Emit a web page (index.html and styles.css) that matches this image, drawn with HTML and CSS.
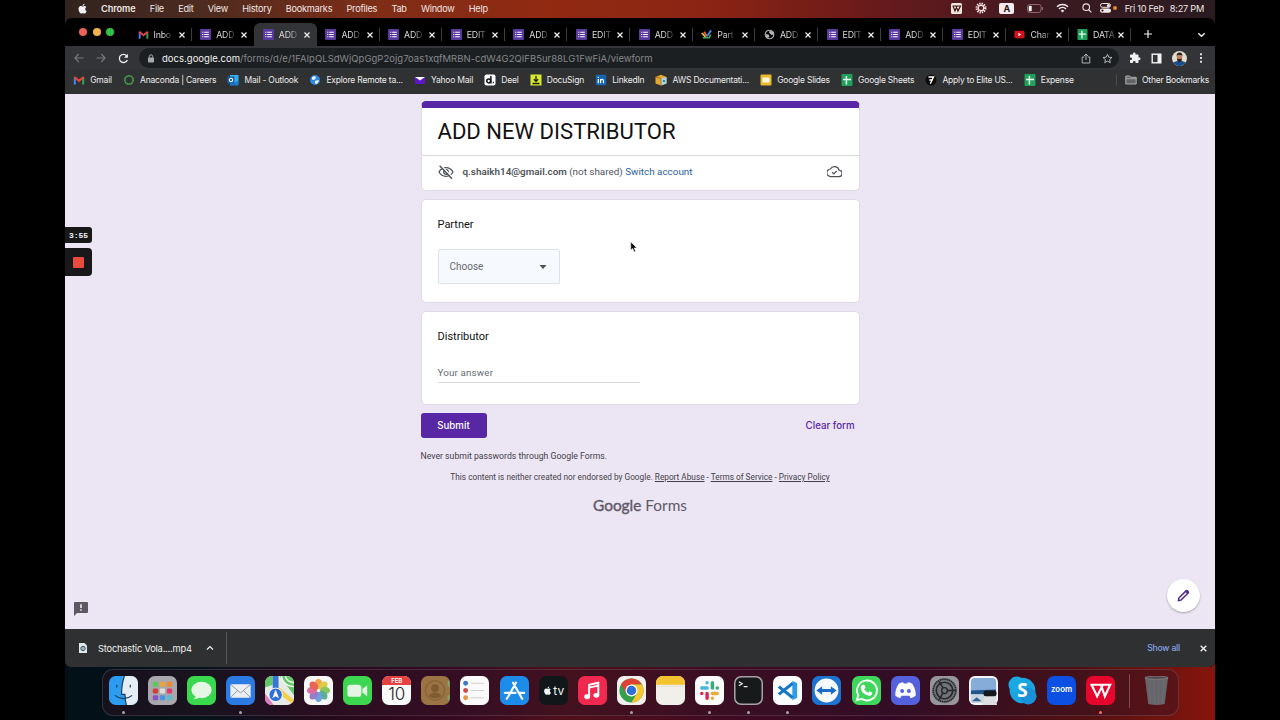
FILE: index.html
```html
<!DOCTYPE html>
<html lang="en">
<head>
  <meta charset="UTF-8" />
  <title>ADD NEW DISTRIBUTOR</title>
  <link rel="stylesheet" href="styles.css">
</head>
<body>
  <!-- shared icons -->
  <svg class="defs" width="0" height="0">
    <symbol id="form" viewBox="0 0 12 12"><rect width="12" height="12" rx="1" fill="#5b3a9e"/><path d="M2.4 3.5h1.2M2.4 6h1.2M2.4 8.5h1.2M4.6 3.5h5M4.6 6h5M4.6 8.5h5" stroke="#fff" stroke-width="1.2"/></symbol>
    <symbol id="sheet" viewBox="0 0 12 12"><rect x=".5" width="11" height="12" rx="1" fill="#1fa05b"/><path d="M2 5.6h8M5.4 2v8.4" stroke="#e8f7ee" stroke-width="1.5"/></symbol>
    <symbol id="gmail" viewBox="0 0 12 12"><path d="M1.8 10.5V3" stroke="#4285f4" stroke-width="2"/><path d="M10.2 10.5V3" stroke="#34a853" stroke-width="2"/><path d="M1.3 3L6 6.8 10.7 3" fill="none" stroke="#ea4335" stroke-width="2.2"/></symbol>
    <symbol id="x" viewBox="0 0 8 8"><path d="M1.5 1.5l5 5M6.5 1.5l-5 5" stroke="#f1f1f1" stroke-width="1.2"/></symbol>
    <symbol id="apple" viewBox="0 0 24 24"><path fill="#f4f4f4" d="M17.1 12.7c0-2.300 1.900-3.400 2-3.500-1.100-1.600-2.800-1.800-3.400-1.800-1.400-.1-2.800.9-3.500.9s-1.800-.8-3-.8c-1.500 0-3 .9-3.800 2.300-1.600 2.800-.4 7 1.200 9.300.8 1.100 1.700 2.400 2.900 2.300 1.200 0 1.600-.7 3-.7s1.800.7 3 .7c1.300 0 2-1.100 2.800-2.200.9-1.300 1.300-2.500 1.300-2.600-.1 0-2.500-1-2.500-3.900zM14.800 5.900c.6-.8 1.100-1.900 1-2.900-.9 0-2.100.6-2.700 1.400-.6.7-1.200 1.800-1 2.800 1 .1 2.100-.5 2.700-1.300z"/></symbol>
  </svg>

  <div class="desktop">
    <header class="menubar">
      <svg class="apple" width="13" height="13"><use href="#apple"/></svg>
      <nav class="menus">
        <b>Chrome</b><span>File</span><span>Edit</span><span>View</span><span>History</span><span>Bookmarks</span><span>Profiles</span><span>Tab</span><span>Window</span><span>Help</span>
      </nav>
      <div class="status">
        <svg width="11" height="11" viewBox="0 0 11 11"><rect width="11" height="11" rx="1.500" fill="#f6e4e0"/><path d="M1.500 3h3.500L7 8l2.500-5H6L4 8 2 3" fill="none" stroke="#3a1512" stroke-width="1.200"/></svg>
        <svg width="12" height="12" viewBox="0 0 12 12"><circle cx="6" cy="6" r="4.200" fill="none" stroke="#f3dede" stroke-width="2.600" stroke-dasharray="1.300 .9"/><circle cx="6" cy="6" r="2.700" fill="none" stroke="#f3dede" stroke-width="1.200"/></svg>
        <span class="lang">A</span>
        <svg width="17" height="9" viewBox="0 0 17 9"><rect x=".5" y=".5" width="13.500" height="8" rx="2.200" fill="none" stroke="#8f666d"/><rect x="1.700" y="1.700" width="3" height="5.600" rx="1" fill="#fff"/><path d="M15.300 3v3" stroke="#8f666d" stroke-width="1.300"/></svg>
        <svg width="13" height="10" viewBox="0 0 13 10"><path d="M1 3.700a7.800 7.800 0 0 1 11 0M3 5.900a5 5 0 0 1 7 0" fill="none" stroke="#f3e8ea" stroke-width="1.500"/><path d="M4.700 7.700a2.600 2.600 0 0 1 3.600 0L6.500 9.600z" fill="#f3e8ea"/></svg>
        <svg width="10" height="10" viewBox="0 0 10 10"><circle cx="4.200" cy="4.200" r="3.300" fill="none" stroke="#eee0e3" stroke-width="1.100"/><path d="M6.600 6.600L9.400 9.400" stroke="#eee0e3" stroke-width="1.200"/></svg>
        <span class="control"><svg width="11" height="10" viewBox="0 0 11 10"><rect x=".5" y=".5" width="10" height="3.800" rx="1.900" fill="none" stroke="#f3e8ea"/><circle cx="8.400" cy="2.400" r="1.500" fill="#f3e8ea"/><rect y="5.500" width="11" height="4.300" rx="2.100" fill="#f3e8ea"/><circle cx="2.500" cy="7.600" r="1.100" fill="#3b1a20"/></svg><i></i></span>
        <span class="date">Fri 10 Feb</span><span class="time">8:27 PM</span>
      </div>
    </header>

    <div class="window">
      <div class="tabstrip">
        <div class="lights"><i class="red"></i><i class="yellow"></i><i class="green"></i></div>
        <div class="tabs">
          <div class="tab"><svg><use href="#gmail"/></svg><span>Inbo</span><svg class="x"><use href="#x"/></svg></div>
          <div class="tab nosep"><svg><use href="#form"/></svg><span>ADD</span><svg class="x"><use href="#x"/></svg></div>
          <div class="tab active"><svg><use href="#form"/></svg><span>ADD</span><svg class="x"><use href="#x"/></svg></div>
          <div class="tab"><svg><use href="#form"/></svg><span>ADD</span><svg class="x"><use href="#x"/></svg></div>
          <div class="tab"><svg><use href="#form"/></svg><span>ADD</span><svg class="x"><use href="#x"/></svg></div>
          <div class="tab"><svg><use href="#form"/></svg><span>EDIT</span><svg class="x"><use href="#x"/></svg></div>
          <div class="tab"><svg><use href="#form"/></svg><span>ADD</span><svg class="x"><use href="#x"/></svg></div>
          <div class="tab"><svg><use href="#form"/></svg><span>EDIT</span><svg class="x"><use href="#x"/></svg></div>
          <div class="tab"><svg><use href="#form"/></svg><span>ADD</span><svg class="x"><use href="#x"/></svg></div>
          <div class="tab"><svg viewBox="0 0 12 12"><path d="M1 4.500l4 4" stroke="#f2b632" stroke-width="2"/><path d="M3.500 3l3 5" stroke="#e2574c" stroke-width="2"/><path d="M6.500 8L11 1.500" stroke="#3f8bea" stroke-width="2"/><path d="M2 9.500h7L10.500 6" fill="none" stroke="#3eaa61" stroke-width="1.800"/></svg><span>Part</span><svg class="x"><use href="#x"/></svg></div>
          <div class="tab"><svg viewBox="0 0 12 12"><circle cx="6" cy="6" r="4.700" fill="none" stroke="#aeb1b5" stroke-width="1.200"/><path d="M1.500 5.500l3.500.5 1 1.500-1.500 2.500-2.500-1.500zM6 1.500l4 1.500 1 3-3 .5-1.500-1.500-1-1z" fill="#aeb1b5"/></svg><span>ADD</span><svg class="x"><use href="#x"/></svg></div>
          <div class="tab"><svg><use href="#form"/></svg><span>EDIT</span><svg class="x"><use href="#x"/></svg></div>
          <div class="tab"><svg><use href="#form"/></svg><span>ADD</span><svg class="x"><use href="#x"/></svg></div>
          <div class="tab"><svg><use href="#form"/></svg><span>EDIT</span><svg class="x"><use href="#x"/></svg></div>
          <div class="tab"><svg viewBox="0 0 12 12"><rect x=".5" y="2" width="11" height="8" rx="1.500" fill="#d5111d"/><path d="M4.800 4.200v3.600l3-1.800z" fill="#fff"/></svg><span>Char</span><svg class="x"><use href="#x"/></svg></div>
          <div class="tab"><svg><use href="#sheet"/></svg><span>DATA</span><svg class="x"><use href="#x"/></svg></div>
        </div>
        <svg class="plus" viewBox="0 0 10 10"><path d="M5 1v8M1 5h8" stroke="#f1f1f1" stroke-width="1.200"/></svg>
        <svg class="chev" viewBox="0 0 8 8"><path d="M1.200 2.800L4 5.600l2.800-2.800" fill="none" stroke="#f1f1f1" stroke-width="1.200"/></svg>
      </div>

      <div class="toolbar">
        <svg width="10" height="10" viewBox="0 0 10 10"><path d="M9.500 5H1M4.800 1L.9 5l3.900 4" fill="none" stroke="#77797c" stroke-width="1.100"/></svg>
        <svg width="10" height="10" viewBox="0 0 10 10"><path d="M.5 5H9M5.200 1l3.900 4-3.900 4" fill="none" stroke="#77797c" stroke-width="1.100"/></svg>
        <svg width="11" height="11" viewBox="0 0 11 11"><path d="M9.300 7A4.100 4.100 0 1 1 8.700 2.800" fill="none" stroke="#f1f1f1" stroke-width="1.300"/><path d="M9.900.8v3.900H6z" fill="#f1f1f1"/></svg>
        <div class="address">
          <svg width="8" height="9" viewBox="0 0 8 9"><rect x="1" y="3.500" width="6" height="5" rx=".7" fill="#a5a8ab"/><path d="M2.300 3.800V2.500a1.700 1.700 0 0 1 3.400 0v1.300" fill="none" stroke="#a5a8ab" stroke-width="1"/></svg>
          <span class="url"><b>docs.google.com</b>/forms/d/e/1FAIpQLSdWjQpGgP2ojg7oas1xqfMRBN-cdW4G2QIFB5ur88LG1FwFiA/viewform</span>
          <svg width="10" height="11" viewBox="0 0 10 11"><path d="M3.300 4H1.200v6h7.600V4H6.700M5 7V1.200M3 3l2-2 2 2" fill="none" stroke="#aeb1b4" stroke-width="1"/></svg>
          <svg class="star" width="11" height="11" viewBox="0 0 24 24"><path d="M12 2.800l2.800 6.400 7 .6-5.300 4.600 1.600 6.800-6.100-3.600-6.100 3.600 1.600-6.800L2.200 9.800l7-.6z" fill="none" stroke="#c0c2c4" stroke-width="2"/></svg>
        </div>
        <svg width="12" height="12" viewBox="0 0 24 24"><path fill="#f1f1f1" d="M20.500 11H19V7c0-1.100-.9-2-2-2h-4V3.500a2.500 2.500 0 0 0-5 0V5H4c-1.100 0-2 .9-2 2v3.800h1.500a2.700 2.700 0 0 1 0 5.400H2V20c0 1.100.9 2 2 2h3.800v-1.500a2.700 2.700 0 0 1 5.400 0V22H17c1.100 0 2-.9 2-2v-4h1.500a2.500 2.500 0 0 0 0-5z"/></svg>
        <svg width="11" height="11" viewBox="0 0 11 11"><rect x="1.200" y="1.200" width="8.600" height="8.600" fill="none" stroke="#f5f5f5" stroke-width="1.400"/><path d="M6.500 1h3.500v9H6.500z" fill="#f5f5f5"/></svg>
        <svg width="15" height="15" viewBox="0 0 15 15"><clipPath id="av"><circle cx="7.500" cy="7.500" r="7.500"/></clipPath><g clip-path="url(#av)"><path d="M0 0h15v15H0z" fill="#e4dccf"/><path d="M0 15v-3l5-2h5l5 2v3z" fill="#174f8c"/><ellipse cx="7.500" cy="6.500" rx="2.700" ry="3.700" fill="#b98260"/><path d="M4.500 5.500q0-4 3-4t3 4l-1-1.500H5.500zM5 7.500q2.500 1 5 0-.3 3.500-2.500 3.500T5 7.500z" fill="#2b201d"/></g></svg>
        <svg width="4" height="12" viewBox="0 0 4 12"><path d="M2 1.200v2M2 5v2M2 8.800v2" stroke="#f1f1f1" stroke-width="1.800"/></svg>
      </div>

      <div class="bookmarks">
        <span class="bm"><svg><use href="#gmail"/></svg>Gmail</span>
        <span class="bm"><svg viewBox="0 0 12 12"><circle cx="6" cy="6" r="4.200" fill="none" stroke="#43a047" stroke-width="1.700" stroke-dasharray="2 .3"/></svg>Anaconda | Careers</span>
        <span class="bm"><svg viewBox="0 0 12 12"><rect x="3" y="1" width="8.500" height="9" fill="#38b0ee"/><path d="M3 6l4.500 3 4-3v5.500H3z" fill="#1a7fd0"/><rect x=".5" y="2.500" width="7" height="7" rx=".7" fill="#0f5fb0"/><circle cx="4" cy="6" r="1.700" fill="none" stroke="#fff" stroke-width="1.100"/></svg>Mail - Outlook</span>
        <span class="bm"><svg viewBox="0 0 12 12"><circle cx="6" cy="6" r="5" fill="#2e86de"/><path d="M3 3l3-1 1 2-2 2-2-.5zM6 7l3-1 1 1-2 3-2-.5z" fill="#e5f2ff"/></svg>Explore Remote ta...</span>
        <span class="bm"><svg viewBox="0 0 12 12"><path d="M1 3h10v7H1z" fill="#5f16c9"/><path d="M1 3h10L6 6.500z" fill="#fff"/></svg>Yahoo Mail</span>
        <span class="bm"><svg viewBox="0 0 12 12"><rect x=".5" y=".5" width="11" height="11" rx="2" fill="#fff"/><circle cx="4.700" cy="7" r="1.900" fill="none" stroke="#111" stroke-width="1.500"/><path d="M6.900 2v7.500M8.700 8.500h1.200" stroke="#111" stroke-width="1.500"/></svg>Deel</span>
        <span class="bm"><svg viewBox="0 0 12 12"><path d="M.5.500h11v11H.5z" fill="#d8e82c"/><path d="M6 2v5M3.800 5.200L6 7.400l2.200-2.200M2.500 9.500h7" fill="none" stroke="#1b1f0a" stroke-width="1.300"/></svg>DocuSign</span>
        <span class="bm"><svg viewBox="0 0 12 12"><rect x=".8" y=".8" width="10.400" height="10.400" rx="1" fill="#1464b4"/><path d="M3.300 5v4.300M3.300 2.800v1.300M5.600 9.300V5M5.600 6.800q0-1.500 1.400-1.500T8.500 7v2.300" fill="none" stroke="#fff" stroke-width="1.200"/></svg>LinkedIn</span>
        <span class="bm"><svg viewBox="0 0 12 12"><path d="M.5 3L6 .8 11.500 3v6.500L6 11.500.5 9.500z" fill="#e9a72c"/><path d="M6 4.500L11.500 3v6.500L6 11.500z" fill="#a9d4e8"/><path d="M.5 3L6 4.500v7" fill="none" stroke="#8d6415" stroke-width=".7"/><path d="M8 6h2v2H8z" fill="#347ca5"/></svg>AWS Documentati...</span>
        <span class="bm"><svg viewBox="0 0 12 12"><rect x=".5" y=".5" width="11" height="11" rx="1" fill="#e9b92c"/><path d="M2.500 3.500h7v5h-7z" fill="#fff8df"/></svg>Google Slides</span>
        <span class="bm"><svg><use href="#sheet"/></svg>Google Sheets</span>
        <span class="bm"><svg viewBox="0 0 12 12"><circle cx="6" cy="6" r="5.500" fill="#0c0c0c"/><path d="M3.500 3h5L5.300 9.700M4.300 6h3.500" fill="none" stroke="#fff" stroke-width="1.400"/></svg>Apply to Elite US...</span>
        <span class="bm"><svg><use href="#sheet"/></svg>Expense</span>
        <span class="bm other"><svg viewBox="0 0 12 12"><path d="M.8 2h4l1 1.300h5.400V10H.8z" fill="#626466" stroke="#b7b9bb" stroke-width=".9"/><path d="M.8 4.700h10.400" stroke="#b7b9bb" stroke-width=".8"/></svg>Other Bookmarks</span>
      </div>

      <main class="page">
        <form class="form">
          <section class="card head">
            <h1>ADD NEW DISTRIBUTOR</h1>
            <div class="account">
              <svg width="16" height="16" viewBox="0 0 24 24"><path d="M1.500 12C4 7.500 7.700 5.500 12 5.500S20 7.500 22.500 12C20 16.500 16.300 18.500 12 18.500S4 16.500 1.500 12z" fill="none" stroke="#4d5156" stroke-width="1.900"/><circle cx="12" cy="12" r="3.500" fill="none" stroke="#4d5156" stroke-width="1.900"/><path d="M4.500 1.800L22 20.500" stroke="#fff" stroke-width="2"/><path d="M2.500 2.500L21 22" stroke="#4d5156" stroke-width="2"/></svg>
              <span class="who"><b>q.shaikh14@gmail.com</b> (not shared) <a>Switch account</a></span>
              <svg class="cloud" width="15" height="15" viewBox="0 0 24 24"><path d="M19.300 10A7.500 7.500 0 0 0 5.400 8 6 6 0 0 0 6 20h13a5 5 0 0 0 .3-10z" fill="none" stroke="#4d5156" stroke-width="2"/><path d="M8.300 13.300l2.500 2.500 4.700-4.700" fill="none" stroke="#4d5156" stroke-width="2"/></svg>
            </div>
          </section>
          <section class="card partner">
            <h2>Partner</h2>
            <div class="select">Choose<svg width="8" height="4" viewBox="0 0 8 4"><path d="M.5 0h7L4 4z" fill="#4d5156"/></svg></div>
          </section>
          <section class="card distributor">
            <h2>Distributor</h2>
            <div class="answer">Your answer</div>
          </section>
          <div class="actions"><span class="submit">Submit</span><span class="clear">Clear form</span></div>
          <p class="never">Never submit passwords through Google Forms.</p>
          <p class="legal">This content is neither created nor endorsed by Google. <u>Report Abuse</u> - <u>Terms of Service</u> - <u>Privacy Policy</u></p>
          <div class="logo"><b>Google</b> Forms</div>
        </form>

        <div class="recorder">
          <span>3:55</span>
          <div class="stop"><i></i></div>
        </div>
        <svg class="feedback" viewBox="0 0 14 14"><path d="M1 0h12q1 0 1 1v9q0 1-1 1H3l-3 3V1q0-1 1-1z" fill="#5c5862"/><path d="M7 2.200v3.800M7 7.200v1.500" stroke="#fff" stroke-width="1.400"/></svg>
        <div class="edit"><svg width="13" height="13" viewBox="0 0 14 14"><path d="M1.500 12.500l.5-2.800 7.700-7.700q.8-.8 1.600 0l.7.700q.8.800 0 1.600L4.300 12z" fill="none" stroke="#4a2a8f" stroke-width="1.600"/><path d="M8.800 3l2.200 2.200 1.300-1.500-1.800-1.800z" fill="#4a2a8f"/></svg></div>
        <svg class="cursor" viewBox="0 0 8 12"><path d="M.7.700v8.600l2-1.800 1.400 3.400 1.500-.6-1.400-3.300h2.700z" fill="#0b0b0b" stroke="#fff" stroke-width=".6"/></svg>
      </main>

      <footer class="downloads">
        <div class="file">
          <svg width="8" height="10" viewBox="0 0 8 10"><path d="M0 0h5.500L8 2.500V10H0z" fill="#dfe9ee"/><circle cx="4" cy="5.500" r="2.200" fill="#9fb4bd" stroke="#3d5560" stroke-width="1"/></svg>
          <span>Stochastic Vola....mp4</span>
          <svg width="8" height="8" viewBox="0 0 8 8"><path d="M1 5.500l3-3 3 3" fill="none" stroke="#f1f1f1" stroke-width="1.200"/></svg>
        </div>
        <span class="showall">Show all</span>
        <svg class="x" width="9" height="9"><use href="#x"/></svg>
      </footer>
    </div>

    <div class="dock">
      <!-- finder -->
      <div class="app run"><svg viewBox="0 0 30 30"><rect width="30" height="30" rx="7" fill="#2b9cf0"/><path d="M16 0h7a7 7 0 0 1 7 7v16a7 7 0 0 1-7 7h-5q-1.500-5-1.500-11H13Q13 8 16 0z" fill="#e6edf4"/><path d="M8 9v3M22 9v3M6 20q9 7 18 0M16 0q-3 8-3 19h3.500q0 6 1.500 11" fill="none" stroke="#1b3c5c" stroke-width="1.200"/></svg></div>
      <!-- launchpad -->
      <div class="app"><svg viewBox="0 0 30 30"><rect width="30" height="30" rx="7" fill="#a8a7ac"/><g><rect x="5" y="6" width="5.500" height="5" rx="1.300" fill="#5cc75a"/><rect x="12.200" y="6" width="5.500" height="5" rx="1.300" fill="#e9a53c"/><rect x="19.500" y="6" width="5.500" height="5" rx="1.300" fill="#f08a2c"/><rect x="5" y="13" width="5.500" height="5" rx="1.300" fill="#cf3f3a"/><rect x="12.200" y="13" width="5.500" height="5" rx="1.300" fill="#dcdcdc"/><rect x="19.500" y="13" width="5.500" height="5" rx="1.300" fill="#dd3c68"/><rect x="5" y="20" width="5.500" height="5" rx="1.300" fill="#8d4fc4"/><rect x="12.200" y="20" width="5.500" height="5" rx="1.300" fill="#4a94e8"/><rect x="19.500" y="20" width="5.500" height="5" rx="1.300" fill="#5bbccf"/></g></svg></div>
      <!-- messages -->
      <div class="app"><svg viewBox="0 0 30 30"><rect width="30" height="30" rx="7" fill="#3ad84f"/><ellipse cx="15" cy="14.500" rx="10.500" ry="8.500" fill="#e6f6e4"/><path d="M9 19q0 4-2.500 5 5 0 7-3z" fill="#e6f6e4"/></svg></div>
      <!-- mail -->
      <div class="app run"><svg viewBox="0 0 30 30"><rect width="30" height="30" rx="7" fill="#2c7be5"/><rect x="4.500" y="8.500" width="21" height="14" rx="1.500" fill="#eceff2"/><path d="M5 9l10 8.500L25 9M5 22l7-7M25 22l-7-7" fill="none" stroke="#8a96a3" stroke-width="1"/></svg></div>
      <!-- maps -->
      <div class="app"><svg viewBox="0 0 30 30"><clipPath id="r"><rect width="30" height="30" rx="7"/></clipPath><g clip-path="url(#r)"><path d="M0 0h30v30H0z" fill="#e8ebe5"/><path d="M0 0h8v9L0 12zM15 0h15v20z" fill="#63c66a"/><path d="M8 0h6v16H8z" fill="#3476d2"/><path d="M0 18l9 12H0z" fill="#e07ac0"/><path d="M15 12l15 13v5L12 17z" fill="#f6cf4a"/><path d="M17 0q1 10 13 11M21 0q1 6 9 7" fill="none" stroke="#f5f7f2" stroke-width="1.500"/><circle cx="11" cy="19.500" r="7" fill="#2f6fd6" stroke="#fff" stroke-width="1"/><path d="M11 14l3.500 9-3.500-2-3.500 2z" fill="#fff"/></g></svg></div>
      <!-- photos -->
      <div class="app"><svg viewBox="0 0 30 30"><rect width="30" height="30" rx="7" fill="#f8f8f8"/><g opacity=".88"><ellipse cx="15" cy="8.200" rx="3.800" ry="5.200" fill="#f29a2e"/><ellipse cx="15" cy="8.200" rx="3.800" ry="5.200" fill="#d8c62e" transform="rotate(45 15 15)"/><ellipse cx="15" cy="8.200" rx="3.800" ry="5.200" fill="#7fbf4a" transform="rotate(90 15 15)"/><ellipse cx="15" cy="8.200" rx="3.800" ry="5.200" fill="#46a58a" transform="rotate(135 15 15)"/><ellipse cx="15" cy="8.200" rx="3.800" ry="5.200" fill="#5b93dc" transform="rotate(180 15 15)"/><ellipse cx="15" cy="8.200" rx="3.800" ry="5.200" fill="#8a6cc0" transform="rotate(225 15 15)"/><ellipse cx="15" cy="8.200" rx="3.800" ry="5.200" fill="#d65c98" transform="rotate(270 15 15)"/><ellipse cx="15" cy="8.200" rx="3.800" ry="5.200" fill="#e4513e" transform="rotate(315 15 15)"/></g></svg></div>
      <!-- facetime -->
      <div class="app"><svg viewBox="0 0 30 30"><rect width="30" height="30" rx="7" fill="#3cd650"/><rect x="4.500" y="9" width="14.500" height="12.500" rx="3" fill="#e4f5e4"/><path d="M20 13.500l5-4v11.500l-5-4z" fill="#e4f5e4"/></svg></div>
      <!-- calendar -->
      <div class="app"><div class="cal"><span>FEB</span><b>10</b></div></div>
      <!-- contacts -->
      <div class="app"><svg viewBox="0 0 30 30"><rect width="30" height="30" rx="7" fill="#9b7444"/><path d="M28.500 5v6M28.500 20v5" stroke="#7ba873" stroke-width="2"/><circle cx="14.500" cy="15" r="10" fill="none" stroke="#8a6538" stroke-width="1.500"/><circle cx="14.500" cy="12.500" r="4" fill="#7f5b31"/><path d="M8 21q1.500-4 6.500-4t6.500 4q-6.500 4-13 0z" fill="#7f5b31"/></svg></div>
      <!-- reminders -->
      <div class="app"><svg viewBox="0 0 30 30"><rect width="30" height="30" rx="7" fill="#fafafa"/><path d="M11 7.500h14M11 15h14M11 22.500h14" stroke="#cfcfd2" stroke-width="1"/><circle cx="5.800" cy="7.500" r="2.500" fill="#3f76c8"/><circle cx="5.800" cy="15" r="2.500" fill="#cf4b45"/><circle cx="5.800" cy="22.500" r="2.500" fill="#e99244"/></svg></div>
      <!-- app store -->
      <div class="app"><svg viewBox="0 0 30 30"><rect width="30" height="30" rx="7" fill="#1c8bea"/><path d="M16.500 7L9 20.500M13.500 7L21.500 21M5 17.500h11M20 17.500h5M8 22l-1 1.500M22 22l1 1.500" stroke="#f4f9ff" stroke-width="2.300" stroke-linecap="round"/></svg></div>
      <!-- tv -->
      <div class="app"><div class="tv"><svg viewBox="0 0 24 24"><use href="#apple"/></svg>tv</div></div>
      <!-- music -->
      <div class="app"><svg viewBox="0 0 30 30"><rect width="30" height="30" rx="7" fill="#f2294f"/><path d="M11.500 21V9l9.500-2v12.500M11.500 12l9.500-2" fill="none" stroke="#fff" stroke-width="2"/><ellipse cx="9.500" cy="21.500" rx="3" ry="2.500" fill="#fff"/><ellipse cx="19" cy="20" rx="3" ry="2.500" fill="#fff"/></svg></div>
      <!-- chrome -->
      <div class="app run"><svg viewBox="0 0 30 30"><rect width="30" height="30" rx="7" fill="#f2f0ee"/><circle cx="15" cy="15" r="12.500" fill="#34a04b"/><path d="M4.200 8.700A12.500 12.500 0 0 1 25.800 8.700H15L9.800 18z" fill="#dd4335"/><path d="M15 8.700h10.800A12.500 12.500 0 0 1 15 27.500l5.400-9.400z" fill="#f6c62e"/><circle cx="15" cy="15" r="6.200" fill="#fff"/><circle cx="15" cy="15" r="4.900" fill="#2f6fd8"/></svg></div>
      <!-- notes -->
      <div class="app"><svg viewBox="0 0 30 30"><rect width="30" height="30" rx="7" fill="#f1efea"/><path d="M0 9V7a7 7 0 0 1 7-7h16a7 7 0 0 1 7 7v2z" fill="#f3c330"/><path d="M1 10.500h28" stroke="#c9c4b6" stroke-width=".8" stroke-dasharray="1 1"/></svg></div>
      <!-- slack -->
      <div class="app run"><svg viewBox="0 0 30 30"><rect width="30" height="30" rx="7" fill="#fbfbfb"/><g fill="none" stroke-width="3.600" stroke-linecap="round"><path d="M12.500 7v.1M7 12.500h5.500" stroke="#46b7e0"/><path d="M18 7v5.500M23 12.500h.1" stroke="#3bab7b"/><path d="M18 18h5M18 23v.1" stroke="#e6ac35"/><path d="M12.500 18v5M7 18h.1" stroke="#d62a5b"/></g></svg></div>
      <!-- terminal -->
      <div class="app run"><svg viewBox="0 0 30 30"><rect x=".8" y=".8" width="28.400" height="28.400" rx="6.500" fill="#18191b" stroke="#a5a2a5" stroke-width="1.600"/><path d="M5 6l3.500 2L5 10M10 11h4" fill="none" stroke="#eee" stroke-width="1.200"/></svg></div>
      <!-- vs code -->
      <div class="app run"><svg viewBox="0 0 30 30"><rect width="30" height="30" rx="7" fill="#fbfcfd"/><path d="M20 5l5 2.500v15L20 25z" fill="#2f9be8"/><path d="M20.500 7.500L6 19M20.500 22.500L6 11" stroke="#1678c2" stroke-width="3.200"/></svg></div>
      <!-- teamviewer -->
      <div class="app"><svg viewBox="0 0 30 30"><rect width="30" height="30" rx="7" fill="#1d74d0"/><circle cx="15" cy="15" r="12.300" fill="#f7fafd"/><path d="M4.500 15l6-4.500v3h9v-3l6 4.500-6 4.500v-3h-9v3z" fill="#1b6cc6"/></svg></div>
      <!-- whatsapp -->
      <div class="app"><svg viewBox="0 0 30 30"><rect width="30" height="30" rx="7" fill="#3fd75b"/><path d="M5 25l1.500-5A10.300 10.300 0 1 1 10 23.700z" fill="none" stroke="#f4fff5" stroke-width="2"/><path d="M11 9l2 .2 1 3-1.300 1.500q1.300 2.500 4 3.500l1.300-1.500 3 1.500q0 3-3.500 3.300-7.500-1-8.500-8.500.3-2.500 2-3z" fill="#fff"/></svg></div>
      <!-- discord -->
      <div class="app"><svg viewBox="0 0 30 30"><rect width="30" height="30" rx="7" fill="#5560dc"/><path d="M8 8q3-1.500 4.500-1.500l.8 1.300h3.400l.8-1.300Q19 6.500 22 8q4 6 3.500 12.500-2.500 2-5 2.500l-1.500-2.500h-8L9.500 23q-2.500-.5-5-2.500Q4 14 8 8z" fill="#fbfbff"/><circle cx="11.500" cy="15.500" r="2" fill="#5560dc"/><circle cx="18.500" cy="15.500" r="2" fill="#5560dc"/></svg></div>
      <!-- settings -->
      <div class="app"><svg viewBox="0 0 30 30"><rect width="30" height="30" rx="7" fill="#97979b"/><circle cx="15" cy="15" r="11.800" fill="#707377" stroke="#26282b" stroke-width="1.800" stroke-dasharray="1.500 .5"/><circle cx="15" cy="15" r="8.500" fill="none" stroke="#26282b" stroke-width="1.700"/><circle cx="15" cy="15" r="3" fill="none" stroke="#26282b" stroke-width="1.500"/><path d="M18 15h8M13.500 12.500L9.500 5.500M13.500 17.500L9.500 24.500" stroke="#26282b" stroke-width="1.600"/></svg></div>
      <!-- preview -->
      <div class="app"><svg viewBox="0 0 30 30"><rect width="30" height="30" rx="6" fill="#f4f5f7"/><rect x="2" y="2" width="26" height="26" rx="4" fill="#86acd9"/><path d="M2 15l26-1v5H2z" fill="#24548c"/><path d="M2 19h26v5q0 4-4 4H6q-4 0-4-4z" fill="#c9d6e2"/><path d="M3 26l5-4 5 4z" fill="#35618f"/><path d="M16 21h11l2 9H14z" fill="#dcdee0"/><rect x="15" y="15" width="13.500" height="6" rx="2.500" fill="#15181c"/></svg></div>
      <!-- skype -->
      <div class="app"><svg viewBox="0 0 30 30"><circle cx="15" cy="15" r="13.300" fill="#1aa5e0"/><circle cx="9" cy="9" r="8.500" fill="#1ba9e3"/><circle cx="21" cy="21" r="8.500" fill="#1990d8"/></svg><span class="skype">S</span></div>
      <!-- zoom -->
      <div class="app"><div class="zoom">zoom</div></div>
      <!-- wps -->
      <div class="app run hot"><svg viewBox="0 0 30 30"><rect width="30" height="30" rx="7" fill="#e5052d"/><path d="M4.500 9h11l4 12L25 9h-7.500l-6 12L6 9.500" fill="none" stroke="#fff" stroke-width="2.200"/></svg></div>
      <div class="divider"></div>
      <!-- trash -->
      <div class="app"><svg viewBox="0 0 30 30"><path d="M3 1h24l-3.500 28q-8.500 2-17 0z" fill="#66666a"/><path d="M7 4l2 24M12.300 4l.7 25M17.700 4l-.7 25M23 4l-2 24" stroke="#6c6c71" stroke-width="1"/><ellipse cx="15" cy="1.800" rx="12" ry="1.600" fill="#4f4b4e" stroke="#878589" stroke-width=".8"/></svg></div>
    </div>
  </div>
</body>
</html>
```
FILE: styles.css
```css
* {
  box-sizing: border-box;
}

body {
  margin: 0;
  background: #000;
  font-family: Inter, "Liberation Sans", sans-serif;
  overflow: hidden;
}

svg {
  display: block;
  flex: none;
}

.defs {
  position: absolute;
}

.desktop {
  display: flex;
  flex-direction: column;
  width: 1150px;
  height: 720px;
  margin: 0 auto;
  background:
    linear-gradient(90deg, #30231f 0, #4e2b1f 12%, #7e2d17 27%, #922a12 42%, #8b2413 56%, #6a1a1b 70%, #3b1a22 86%, #291b20 100%) top / 100% 26px no-repeat,
    linear-gradient(90deg, #031017 0, #07131b 12%, #26091d 23%, #360a22 34%, #50101b 44%, #3f0a22 58%, #320925 72%, #4f1013 88%, #86150d 100%);
}

/* menu bar */
.menubar {
  display: flex;
  align-items: center;
  height: 18px;
  padding: 0 11px 2px 11px;
  font-size: 9.2px;
  letter-spacing: -.25px;
  color: #f0e6e3;
  white-space: nowrap;
}

.menus {
  display: flex;
  gap: 14.2px;
  margin-left: 12px;
}

.menus b {
  font-weight: 600;
  letter-spacing: -.1px;
}

.status {
  display: flex;
  align-items: center;
  gap: 12.5px;
  margin-left: auto;
}

.lang {
  width: 15px;
  height: 11px;
  border-radius: 2px;
  background: #f5eaec;
  color: #2d1218;
  font-size: 9px;
  font-weight: 700;
  line-height: 11px;
  text-align: center;
}

.control {
  display: flex;
  align-items: center;
  gap: 2px;
  margin-left: -4px;
}

.control i {
  width: 4px;
  height: 4px;
  border-radius: 50%;
  background: #e08a2b;
}

.date {
  margin-left: -5px;
}

.time {
  margin-left: -6.5px;
}

/* browser window */
.window {
  display: flex;
  flex-direction: column;
  height: 649px;
  border-radius: 7px 7px 6px 6px;
  overflow: hidden;
  background: #000;
}

.tabstrip {
  display: flex;
  align-items: flex-end;
  height: 28px;
}

.lights {
  display: flex;
  gap: 5.500px;
  width: 64px;
  padding: 0 0 10px 14px;
}

.lights i {
  width: 8px;
  height: 8px;
  border-radius: 50%;
}

.red { background: #ee6158; }
.yellow { background: #f0b348; }
.green { background: #30c546; }

.tabs {
  display: flex;
}

.tab {
  display: flex;
  align-items: center;
  width: 62.650px;
  height: 23px;
  padding: 0 6px 0 8.500px;
  font-size: 8.800px;
  color: #dcdcdc;
  background: linear-gradient(#3c3d40, #3c3d40) right 5px / 1px 13px no-repeat;
}

.tab svg {
  width: 11px;
  height: 11px;
}

.tab span {
  margin-left: 5px;
  letter-spacing: -.2px;
  white-space: nowrap;
  -webkit-mask-image: linear-gradient(90deg, #000 50%, rgba(0, 0, 0, .25));
  mask-image: linear-gradient(90deg, #000 50%, rgba(0, 0, 0, .25));
}

.tab .x {
  width: 8px;
  height: 8px;
  margin-left: auto;
}

.tab.nosep {
  background: none;
}

.tab.active {
  border-radius: 6px 6px 0 0;
  background: #333437;
}

.plus {
  width: 10px;
  height: 10px;
  margin: 0 0 7px 12px;
}

.chev {
  width: 9px;
  height: 9px;
  margin: 0 9px 7px auto;
}

.toolbar {
  display: flex;
  align-items: center;
  height: 24px;
  padding: 0 12px 0 9px;
  background: #333437;
}

.toolbar > svg {
  margin-right: 12px;
}

.address ~ svg {
  margin-right: 10px;
}

.toolbar > svg:last-child {
  margin-right: 0;
  margin-left: 2px;
}

.address {
  display: flex;
  flex: 1;
  align-items: center;
  height: 20px;
  margin-right: 10px;
  margin-left: -2px;
  padding: 0 6px 0 8px;
  border-radius: 10px;
  background: #1c1f21;
  font-size: 9.500px;
  color: #85888c;
}

.url {
  flex: 1;
  margin-left: 7px;
  letter-spacing: .02px;
  white-space: nowrap;
}

.url b {
  font-weight: 400;
  color: #f2f2f2;
}

.star {
  margin-left: 11px;
}

.bookmarks {
  display: flex;
  align-items: center;
  gap: 11px;
  height: 24px;
  padding: 0 6px 4px 8px;
  background: #303133;
  font-size: 8.500px;
  letter-spacing: -.2px;
  color: #ececec;
  white-space: nowrap;
}

.bm {
  display: flex;
  align-items: center;
  gap: 5.200px;
}

.bm svg {
  width: 12px;
  height: 12px;
}

.other {
  margin-left: auto;
  padding-left: 8px;
  border-left: 1px solid #4a4b4e;
}

/* form */
.page {
  position: relative;
  flex: 1;
  background: #ece6f4;
  font-family: Roboto, sans-serif;
}

.form {
  width: 439px;
  margin: 0 auto;
  padding-top: 7px;
}

.card {
  margin-bottom: 8px;
  border: 1px solid #dfdae6;
  border-radius: 5px;
  background: #fff;
}

.head {
  height: 90px;
  border-top: 7px solid #5727a6;
}

h1 {
  height: 48px;
  margin: 0;
  padding-left: 16px;
  border-bottom: 1px solid #dadce0;
  color: #111;
  font-size: 22.050px;
  font-weight: 400;
  line-height: 47px;
}

.account {
  display: flex;
  align-items: center;
  height: 31px;
  padding: 0 17px 0 16px;
  font-size: 9.870px;
  color: #50545a;
}

.who {
  margin-left: 9px;
}

.who b {
  font-weight: 600;
}

.who a {
  color: #2a5f9e;
}

.cloud {
  margin-left: auto;
}

.partner {
  height: 104px;
  padding: 18px 16px 0;
}

h2 {
  margin: 0;
  color: #111;
  font-size: 11px;
  font-weight: 400;
  line-height: 14px;
}

.select {
  display: flex;
  align-items: center;
  justify-content: space-between;
  width: 122px;
  height: 35px;
  margin-top: 17px;
  padding: 0 12px 0 11px;
  border: 1px solid #dde1e8;
  border-radius: 2px;
  background: #f6f9fe;
  font-size: 10px;
  color: #666a70;
}

.distributor {
  height: 94px;
  padding: 17px 16px 0;
}

.distributor h2 {
  line-height: 16px;
}

.answer {
  width: 202px;
  height: 22px;
  margin-top: 16px;
  padding-top: 5px;
  border-bottom: 1px solid #d5d7db;
  font-size: 9.800px;
  letter-spacing: .15px;
  line-height: 14px;
  color: #686c72;
}

.actions {
  display: flex;
  align-items: center;
  justify-content: space-between;
  padding-right: 5px;
  font: 500 9.700px Inter, sans-serif;
}

.submit {
  width: 66px;
  height: 25px;
  border-radius: 3px;
  background: #5727a6;
  color: #fff;
  line-height: 25px;
  text-align: center;
}

.clear {
  color: #5727a6;
}

.never,
.legal {
  margin: 0;
  font-size: 8.700px;
  line-height: 12px;
  color: #454049;
}

.never {
  margin-top: 12px;
}

.legal {
  margin-top: 9px;
  font-size: 8.250px;
  text-align: center;
}

.logo {
  margin-top: 12px;
  color: #5f5967;
  font-family: Lato, sans-serif;
  font-size: 15.400px;
  line-height: 20px;
  text-align: center;
}

.logo b {
  font-weight: 400;
  -webkit-text-stroke: .4px #5f5967;
}

/* floating things over the page */
.recorder {
  position: absolute;
  top: 133px;
  left: 0;
  width: 27px;
}

.recorder span {
  display: block;
  height: 16px;
  border-radius: 0 3px 3px 0;
  background: #18181a;
  color: #f5f5f5;
  font: 700 8px/17px "Liberation Mono", monospace;
  text-align: center;
}

.stop {
  display: flex;
  align-items: center;
  justify-content: center;
  height: 28px;
  margin-top: 5px;
  border-radius: 0 4px 4px 0;
  background: #18181a;
}

.stop i {
  width: 11px;
  height: 11px;
  border-radius: 1px;
  background: #ea4a3d;
}

.feedback {
  position: absolute;
  bottom: 13px;
  left: 9px;
  width: 14px;
  height: 14px;
}

.edit {
  position: absolute;
  right: 15px;
  bottom: 17px;
  display: flex;
  align-items: center;
  justify-content: center;
  width: 33px;
  height: 33px;
  border-radius: 50%;
  background: #fff;
  box-shadow: 0 1px 2px rgba(0, 0, 0, .3);
}

.cursor {
  position: absolute;
  top: 147px;
  left: 565px;
  width: 8px;
  height: 12px;
}

/* downloads */
.downloads {
  display: flex;
  align-items: center;
  height: 38px;
  padding-right: 7px;
  background: #2f3031;
  color: #f0f0f0;
  font-size: 9.300px;
  letter-spacing: -.2px;
}

.file {
  display: flex;
  align-items: center;
  width: 162px;
  height: 32px;
  padding: 0 12px 0 14px;
  border-right: 1px solid #55565a;
}

.file span {
  flex: 1;
  margin-left: 11px;
}

.showall {
  margin: 0 19px 0 auto;
  color: #84a3e6;
  font-size: 8.600px;
  font-weight: 500;
}

/* dock */
.dock {
  display: flex;
  gap: 10.120px;
  width: 1077px;
  height: 47px;
  margin: 2px auto 0;
  padding: 6px 6px 0;
  border: 1px solid rgba(255, 255, 255, .12);
  border-radius: 11px;
  background: rgba(50, 20, 38, .4);
}

.app {
  position: relative;
  flex: none;
  width: 29px;
  height: 29px;
}

.app > svg {
  width: 29px;
  height: 29px;
}

.app.run::after {
  content: "";
  position: absolute;
  bottom: -9px;
  left: 13px;
  width: 3px;
  height: 3px;
  border-radius: 50%;
  background: #aaa2a8;
}

.app.hot::after {
  background: #ff6b6b;
}

.cal {
  height: 29px;
  border-radius: 7px;
  overflow: hidden;
  background: #fafafa;
  color: #222;
  text-align: center;
}

.cal span {
  display: block;
  height: 9px;
  background: #e5413f;
  color: #fff;
  font-size: 6px;
  font-weight: 600;
  line-height: 10px;
}

.cal b {
  display: block;
  font-size: 17px;
  font-weight: 300;
  line-height: 19px;
}

.tv {
  display: flex;
  align-items: center;
  justify-content: center;
  height: 29px;
  border-radius: 7px;
  background: #111719;
  color: #f4f4f4;
  font-size: 12px;
}

.tv svg {
  width: 11px;
  height: 11px;
}

.skype {
  position: absolute;
  inset: 0;
  color: #fff;
  font: 700 19px/29px "Open Sans", sans-serif;
  text-align: center;
}

.zoom {
  height: 29px;
  border-radius: 7px;
  background: #0b4fe3;
  color: #fff;
  font-size: 8px;
  font-weight: 600;
  line-height: 27px;
  text-align: center;
}

.divider {
  width: 1px;
  height: 34px;
  margin: -2px 2px 0 3.500px;
  background: rgba(255, 255, 255, .25);
}
```
